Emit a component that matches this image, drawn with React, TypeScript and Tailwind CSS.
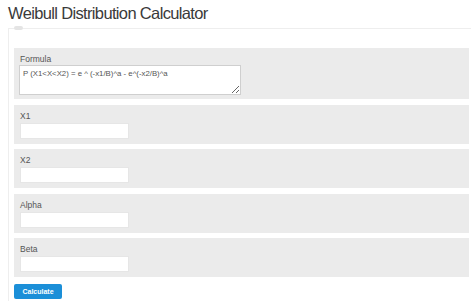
import React from "react";

const fields = ["X1", "X2", "Alpha", "Beta"];

function Panel({
  label,
  labelH,
  pb,
  children,
}: {
  label: string;
  labelH: string;
  pb: string;
  children: React.ReactNode;
}) {
  return (
    <div className={`bg-[#ebebeb] px-[6px] pt-[5px] ${pb}`}>
      <div className={`${labelH} text-[8.5px] leading-[12px] text-[#555]`}>{label}</div>
      {children}
    </div>
  );
}

export default function App() {
  return (
    <div className="w-[474px] h-[301px] bg-white overflow-hidden font-['Liberation_Sans',Arial,sans-serif]">
      <h1 className="pl-[8px] pt-[2px] h-[28px] text-[16.5px] leading-[23px] tracking-[-0.65px] text-[#3a3a3a]">
        Weibull Distribution Calculator
      </h1>
      <div className="relative ml-[8px] mr-[3px] border-t border-l border-[#eeeeee] pt-[19px] pl-[5px] pr-[2px]">
        <div className="absolute left-[5px] top-[-3px] w-[9px] h-[4px] rounded-full bg-[#e4e4e4]" />
        <div className="flex flex-col gap-[5.5px]">
          <Panel label="Formula" labelH="h-[12px]" pb="pb-[4px]">
            <textarea
              readOnly
              value="P (X1<X<X2) = e ^ (-x1/B)^a - e^(-x2/B)^a"
              className="block w-[222px] h-[30px] ml-[-1px] bg-white border border-[#cfcfcf] px-[3px] py-[2px] text-[7.8px] leading-[11px] text-[#555] outline-none"
            />
          </Panel>
          {fields.map((f) => (
            <Panel key={f} label={f} labelH="h-[13px]" pb="pb-[5px]">
              <input
                readOnly
                className="block w-[109px] h-[16px] bg-white border border-[#e6e6e6] outline-none"
              />
            </Panel>
          ))}
        </div>
        <button className="mt-[5px] w-[48px] h-[15px] rounded-[2px] bg-[#1b8fd8] text-white text-[7px] font-bold leading-[15px]">
          Calculate
        </button>
      </div>
    </div>
  );
}
